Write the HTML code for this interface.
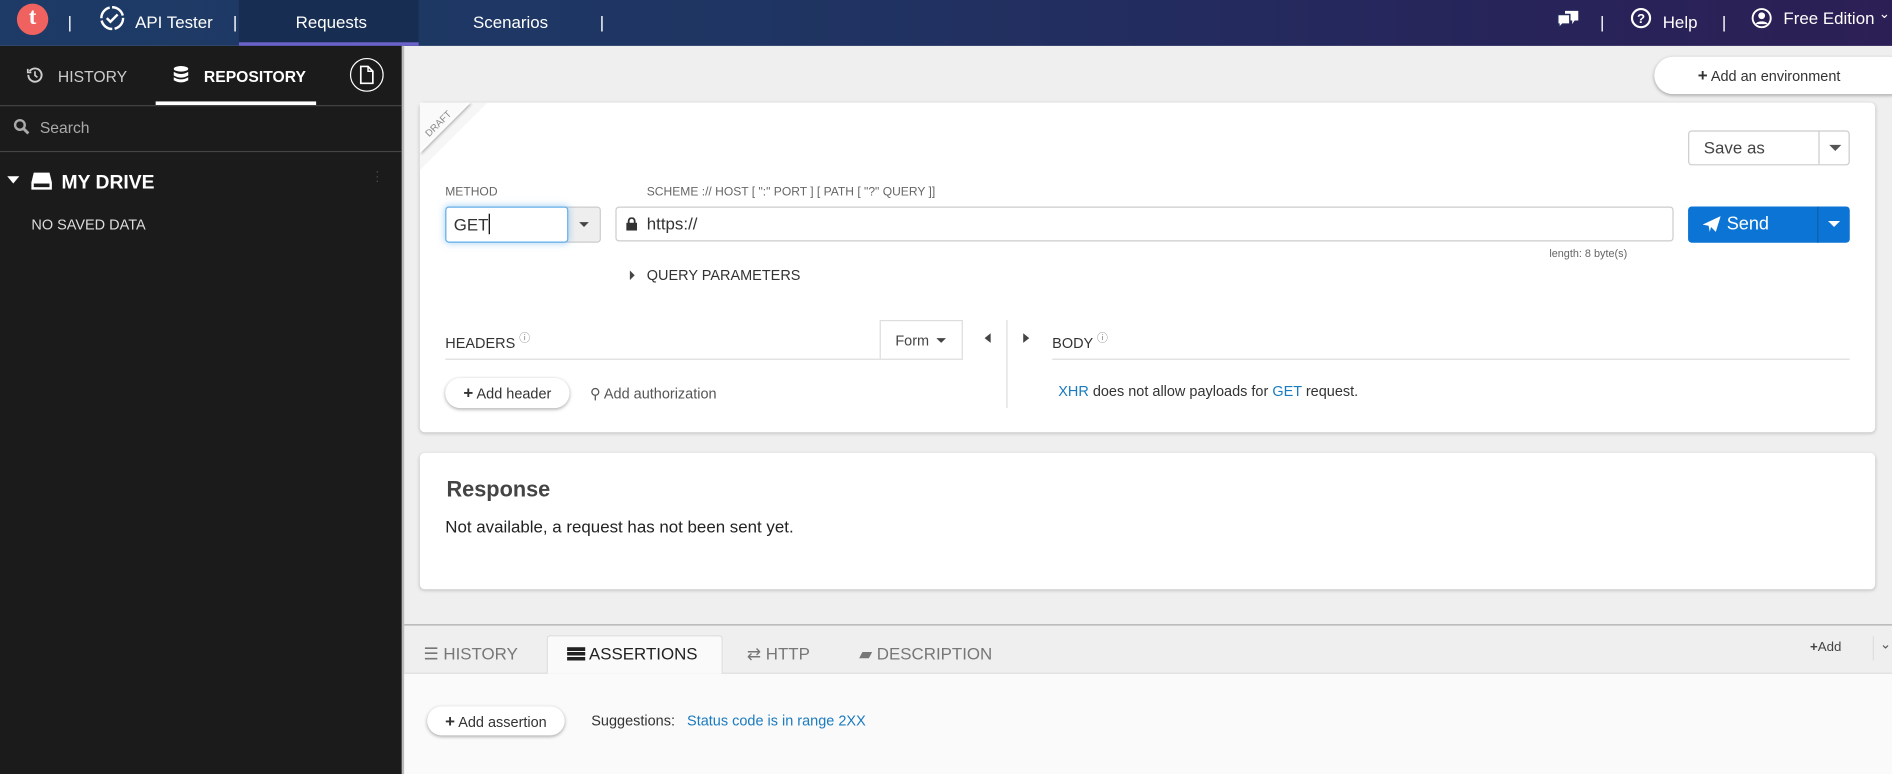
<!DOCTYPE html>
<html><head><meta charset="utf-8"><style>
*{box-sizing:border-box;margin:0;padding:0}
html,body{width:1892px;height:774px;overflow:hidden;background:#efefef}
#s{position:absolute;left:0;top:0;width:1568px;height:641px;transform:scale(1.20663,1.2075);transform-origin:0 0;font-family:"Liberation Sans",Arial,sans-serif;color:#333;overflow:hidden}
.a{position:absolute}
.top{left:0;top:0;width:1568px;height:38px;background:linear-gradient(90deg,#1d3b66 0%,#1f3563 40%,#27245a 80%,#2c1f55 100%);color:#fff;font-size:14px}
.top .t{top:10px;white-space:nowrap}
.side{left:0;top:38px;width:333px;height:603px;background:#1b1b1b;color:#fff}
.lbl{font-size:10px;color:#666}
.card{background:#fff;border-radius:4px;box-shadow:0 1px 3px rgba(0,0,0,.2)}
.pill{background:#fff;border-radius:14px;box-shadow:0 1px 3px rgba(0,0,0,.35);font-size:12px;color:#333;text-align:center}
.link{color:#1a7bbf}
</style></head><body><div id="s">
<div class="a top">
 <div class="a" style="left:14px;top:3px;width:26px;height:26px;border-radius:50%;background:#f0625f;color:#fff;font:bold 19px 'Liberation Serif',serif;text-align:center;line-height:24px">t</div>
 <div class="a t" style="left:56px">|</div>
 <svg class="a" style="left:82px;top:4px" width="22" height="22" viewBox="0 0 22 22"><circle cx="11" cy="11" r="9" fill="none" stroke="#fff" stroke-width="2" stroke-dasharray="12 2"/><path d="M6.5 11l3 3 6-6" fill="none" stroke="#fff" stroke-width="2"/></svg>
 <div class="a t" style="left:112px">API Tester</div>
 <div class="a t" style="left:193px">|</div>
 <div class="a" style="left:198px;top:0;width:149px;height:38px;background:#182d52;border-bottom:3px solid #6b63c9"></div>
 <div class="a t" style="left:245px">Requests</div>
 <div class="a t" style="left:392px">Scenarios</div>
 <div class="a t" style="left:497px">|</div>
 <svg class="a" style="left:1290px;top:6px" width="20" height="18" viewBox="0 0 20 18"><path d="M7 3h11v8h-3l-2 3v-3H7z" fill="#fff"/><path d="M1 6h10v8H5l-3 3v-3H1z" fill="#fff" stroke="#252a5c" stroke-width="1.2"/></svg>
 <div class="a t" style="left:1326px">|</div>
 <svg class="a" style="left:1351px;top:6px" width="18" height="18" viewBox="0 0 18 18"><circle cx="9" cy="9" r="7.5" fill="none" stroke="#fff" stroke-width="1.8"/><text x="9" y="13" fill="#fff" font-size="11" font-weight="bold" text-anchor="middle" font-family="Liberation Sans">?</text></svg>
 <div class="a t" style="left:1378px">Help</div>
 <div class="a t" style="left:1427px">|</div>
 <svg class="a" style="left:1451px;top:6px" width="18" height="18" viewBox="0 0 18 18"><circle cx="9" cy="9" r="7.5" fill="none" stroke="#fff" stroke-width="1.6"/><circle cx="9" cy="7" r="2.8" fill="#fff"/><path d="M4 14c1-3 9-3 10 0" fill="#fff"/></svg>
 <div class="a t" style="left:1478px;font-size:14px;top:7px">Free Edition</div>
 <div class="a" style="left:1557px;top:5px;font-size:11px">⌄</div>
</div>
<div class="a side">
 <svg class="a" style="left:22px;top:17px" width="14" height="14" viewBox="0 0 14 14"><path d="M2.5 4A5.5 5.5 0 1 1 1.5 7" fill="none" stroke="#ccc" stroke-width="1.6"/><path d="M1 2v3h3" fill="none" stroke="#ccc" stroke-width="1.4"/><path d="M7 4v3.5l2 1.5" fill="none" stroke="#ccc" stroke-width="1.4"/></svg>
 <div class="a" style="left:48px;top:18px;font-size:13px;color:#ccc">HISTORY</div>
 <svg class="a" style="left:143px;top:16px" width="14" height="15" viewBox="0 0 14 15"><ellipse cx="7" cy="3" rx="6" ry="2.3" fill="#fff"/><path d="M1 5.5q6 3.5 12 0v3q-6 3.5-12 0zM1 10q6 3.5 12 0v2.5q-6 3.5-12 0z" fill="#fff"/></svg>
 <div class="a" style="left:169px;top:18px;font-size:13px;font-weight:bold">REPOSITORY</div>
 <div class="a" style="left:129px;top:46px;width:133px;height:3px;background:#fff"></div>
 <div class="a" style="left:0;top:49px;width:333px;height:1px;background:#444"></div>
 <div class="a" style="left:290px;top:10px;width:28px;height:28px;border:1.5px solid #fff;border-radius:50%"></div>
 <svg class="a" style="left:298px;top:16px" width="12" height="16" viewBox="0 0 12 16"><path d="M1 1h6l4 4v10H1z" fill="none" stroke="#fff" stroke-width="1.4"/><path d="M7 1v4h4" fill="none" stroke="#fff" stroke-width="1.2"/></svg>
 <svg class="a" style="left:11px;top:60px" width="14" height="14" viewBox="0 0 14 14"><circle cx="5.5" cy="5.5" r="4" fill="none" stroke="#aaa" stroke-width="2"/><path d="M8.5 8.5l4 4" stroke="#aaa" stroke-width="2.4"/></svg>
 <div class="a" style="left:33px;top:60px;font-size:13px;color:#aaa">Search</div>
 <div class="a" style="left:0;top:87px;width:333px;height:1px;background:#444"></div>
 <div class="a" style="left:6px;top:108px;width:0;height:0;border-left:5px solid transparent;border-right:5px solid transparent;border-top:6px solid #fff"></div>
 <svg class="a" style="left:25px;top:104px" width="19" height="16" viewBox="0 0 19 16"><path d="M3 1h13l2 8v6H1V9z" fill="#fff"/><rect x="3" y="10" width="13" height="3" fill="#1b1b1b"/></svg>
 <div class="a" style="left:51px;top:105px;font-size:16px;font-weight:bold">MY DRIVE</div>
 <div class="a" style="left:311px;top:103px;color:#555;font-size:10px;line-height:4px">·<br>·<br>·</div>
 <div class="a" style="left:26px;top:141px;font-size:12px;color:#ddd">NO SAVED DATA</div>
</div>
<div class="a" style="left:333px;top:38px;width:2px;height:603px;background:#bbb"></div>

<div class="a pill" style="left:1371px;top:47px;width:210px;height:31px;border-radius:16px;line-height:31px;font-size:12px;text-align:left;padding-left:36px"><b style="font-size:14px">+</b> Add an environment</div>

<div class="a card" style="left:348px;top:85px;width:1206px;height:273px">
 <div class="a" style="left:0;top:0;width:0;height:0;border-top:56px solid #f6f6f6;border-right:56px solid transparent"></div>
 <div class="a" style="left:0;top:0;width:0;height:0;border-top:42px solid #fff;border-right:42px solid transparent;filter:drop-shadow(1px 1px 1px rgba(0,0,0,.25))"></div>
 <div class="a" style="left:0;top:0;width:0;height:0;border-top:40px solid #fafafa;border-right:40px solid transparent"></div>
 <div class="a" style="left:2px;top:13px;font-size:8px;color:#888;transform:rotate(-45deg)">DRAFT</div>
 <div class="a" style="left:1051px;top:23px;width:134px;height:29px;border:1px solid #ccc;border-radius:3px;font-size:14px;line-height:27px;padding-left:12px;color:#444">Save as<div class="a" style="left:107px;top:0;width:1px;height:27px;background:#ccc"></div><div class="a" style="left:116px;top:11px;border-left:5px solid transparent;border-right:5px solid transparent;border-top:5px solid #555"></div></div>
 <div class="a lbl" style="left:21px;top:69px">METHOD</div>
 <div class="a lbl" style="left:188px;top:69px">SCHEME :// HOST [ ":" PORT ] [ PATH [ "?" QUERY ]]</div>
 <div class="a" style="left:21px;top:86px;width:129px;height:30px;border:1px solid #ccc;border-radius:3px;background:#eee"></div>
 <div class="a" style="left:21px;top:86px;width:102px;height:30px;border:1px solid #66afe9;border-radius:3px;background:#fff;box-shadow:0 0 6px rgba(102,175,233,.6);font-size:14px;line-height:28px;padding-left:6px;color:#333">GET<span style="display:inline-block;width:1px;height:17px;background:#000;vertical-align:-3px"></span></div>
 <div class="a" style="left:132px;top:99px;border-left:4px solid transparent;border-right:4px solid transparent;border-top:4px solid #444"></div>
 <div class="a" style="left:162px;top:86px;width:877px;height:29px;border:1px solid #ccc;border-radius:3px;font-size:14px;line-height:27px;padding-left:25px;color:#333">https://</div>
 <svg class="a" style="left:171px;top:95px" width="9" height="11" viewBox="0 0 9 11"><rect x="0" y="4.5" width="9" height="6.5" fill="#333"/><path d="M2 5V3a2.5 2.5 0 0 1 5 0v2" fill="none" stroke="#333" stroke-width="1.5"/></svg>
 <div class="a" style="left:1051px;top:86px;width:134px;height:30px;background:#0b74d4;border-radius:3px;color:#fff;font-size:15px;line-height:30px;padding-left:32px">Send<div class="a" style="left:107px;top:0;width:1px;height:30px;background:#0860b0"></div><div class="a" style="left:116px;top:12px;border-left:5px solid transparent;border-right:5px solid transparent;border-top:5px solid #fff"></div></div>
 <svg class="a" style="left:1063px;top:94px" width="15" height="14" viewBox="0 0 15 14"><path d="M0 7L15 0 11 13 7 9 6 13 5 8z" fill="#fff"/></svg>
 <div class="a" style="left:936px;top:120px;font-size:9px;color:#666">length: 8 byte(s)</div>
 <div class="a" style="left:174px;top:139px;border-top:4px solid transparent;border-bottom:4px solid transparent;border-left:4px solid #444"></div>
 <div class="a" style="left:188px;top:136px;font-size:12px;color:#333">QUERY PARAMETERS</div>
 <div class="a" style="left:21px;top:188px;font-size:12px;color:#333">HEADERS <sup style="font-size:9px;color:#888">ⓘ</sup></div>
 <div class="a" style="left:381px;top:180px;width:69px;height:32px;border:1px solid #ddd;border-bottom:none;font-size:12px;line-height:32px;padding-left:12px;color:#444">Form</div>
 <div class="a" style="left:428px;top:195px;border-left:4px solid transparent;border-right:4px solid transparent;border-top:4px solid #444"></div>
 <div class="a" style="left:21px;top:212px;width:429px;height:1px;background:#ddd"></div>
 <div class="a" style="left:468px;top:191px;border-top:4px solid transparent;border-bottom:4px solid transparent;border-right:5px solid #444"></div>
 <div class="a" style="left:500px;top:191px;border-top:4px solid transparent;border-bottom:4px solid transparent;border-left:5px solid #444"></div>
 <div class="a" style="left:486px;top:180px;width:1px;height:73px;background:#ddd"></div>
 <div class="a" style="left:524px;top:188px;font-size:12px;color:#333">BODY <sup style="font-size:9px;color:#888">ⓘ</sup></div>
 <div class="a" style="left:524px;top:212px;width:661px;height:1px;background:#ddd"></div>
 <div class="a pill" style="left:21px;top:228px;width:103px;height:25px;line-height:25px"><b style="font-size:14px">+</b> Add header</div>
 <div class="a" style="left:141px;top:234px;font-size:12px;color:#555">⚲ Add authorization</div>
 <div class="a" style="left:529px;top:232px;font-size:12px;color:#333"><span class="link">XHR</span> does not allow payloads for <span class="link">GET</span> request.</div>
</div>

<div class="a card" style="left:348px;top:375px;width:1206px;height:113px">
 <div class="a" style="left:22px;top:20px;font-size:18px;font-weight:bold;color:#444">Response</div>
 <div class="a" style="left:21px;top:53px;font-size:14px;color:#222">Not available, a request has not been sent yet.</div>
</div>

<div class="a" style="left:335px;top:517px;width:1233px;height:1px;background:#aaa"></div>
<div class="a" style="left:335px;top:557px;width:1233px;height:84px;background:#fafafa;border-top:1px solid #ddd"></div>
<div class="a" style="left:453px;top:526px;width:146px;height:32px;background:#fafafa;border:1px solid #ddd;border-bottom:none;border-radius:3px 3px 0 0"></div>
<div class="a" style="left:351px;top:533px;font-size:14px;color:#777">☰ HISTORY</div>
<div class="a" style="left:470px;top:533px;font-size:14px;color:#222"><span style="display:inline-block;width:15px;height:11px;background:repeating-linear-gradient(#222 0 3px,#fafafa 3px 4px);vertical-align:-1px"></span> ASSERTIONS</div>
<div class="a" style="left:619px;top:533px;font-size:14px;color:#777">⇄ HTTP</div>
<div class="a" style="left:712px;top:533px;font-size:14px;color:#777">▰ DESCRIPTION</div>
<div class="a" style="left:1500px;top:530px;font-size:11px;color:#444"><b>+</b>Add</div>
<div class="a" style="left:1552px;top:527px;width:1px;height:20px;background:#ddd"></div>
<div class="a" style="left:1558px;top:527px;font-size:11px;color:#555">⌄</div>
<div class="a pill" style="left:354px;top:585px;width:114px;height:24px;line-height:24px"><b style="font-size:14px">+</b> Add assertion</div>
<div class="a" style="left:490px;top:590px;font-size:12px;color:#333">Suggestions:&nbsp;&nbsp; <span class="link">Status code is in range 2XX</span></div>
</div></body></html>
